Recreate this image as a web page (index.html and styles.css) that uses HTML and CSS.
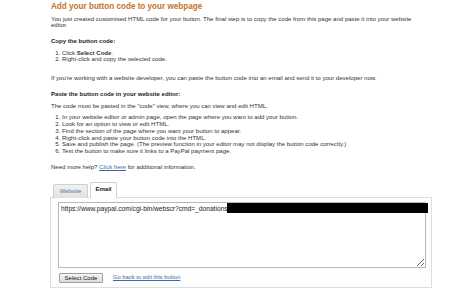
FILE: index.html
```html
<!DOCTYPE html>
<html>
<head>
<meta charset="utf-8">
<link rel="stylesheet" href="styles.css">
</head>
<body>
<div class="page">
  <h1 class="title">Add your button code to your webpage</h1>
  <p class="intro">You just created customised HTML code for your button. The final step is to copy the code from this page and paste it into your website editor.</p>
  <h2 class="sub sub-copy">Copy the button code:</h2>
  <ol class="steps steps-copy">
    <li>Click <b>Select Code</b>.</li>
    <li>Right-click and copy the selected code.</li>
  </ol>
  <p class="dev">If you're working with a website developer, you can paste the button code into an email and send it to your developer now.</p>
  <h2 class="sub sub-paste">Paste the button code in your website editor:</h2>
  <p class="must">The code must be pasted in the "code" view, where you can view and edit HTML.</p>
  <ol class="steps steps-paste">
    <li>In your website editor or admin page, open the page where you want to add your button.</li>
    <li>Look for an option to view or edit HTML.</li>
    <li>Find the section of the page where you want your button to appear.</li>
    <li>Right-click and paste your button code into the HTML.</li>
    <li>Save and publish the page. (The preview function in your editor may not display the button code correctly.)</li>
    <li>Test the button to make sure it links to a PayPal payment page.</li>
  </ol>
  <p class="help">Need more help? <a href="#">Click here</a> for additional information.</p>

  <div class="tabs">
    <div class="tab">Website</div>
    <div class="tab tab-active">Email</div>
  </div>
  <div class="panel">
    <div class="code-wrap">
      <textarea class="code">https://www.paypal.com/cgi-bin/webscr?cmd=_donations</textarea>
      <span class="redact"></span>
    </div>
    <div class="actions">
      <button class="select-btn">Select Code</button>
      <a class="back" href="#">Go back to edit this button</a>
    </div>
  </div>
</div>
</body>
</html>
```

FILE: styles.css
```css
html, body {
  margin: 0;
  padding: 0;
  background: #fff;
}
.page {
  font-family: "Liberation Sans", Arial, sans-serif;
  font-size: 6.05px;
  line-height: 6.8px;
  color: #333;
  margin-left: 51px;
  width: 382px;
  padding-top: 2px;
}
.page p,
.page ol {
  max-width: 370px;
}
.title {
  margin: 0;
  font-size: 8.15px;
  line-height: 10px;
  color: #c5732a;
  font-weight: bold;
}
.intro {
  margin: 3.6px 0 0;
}
.sub {
  margin: 0;
  font-size: 6.05px;
  font-weight: bold;
  color: #222;
}
.sub-copy { margin-top: 8.4px; }
.steps {
  margin: 0;
  padding-left: 11px;
}
.steps-copy { margin-top: 5.2px; }
.dev { margin: 12.2px 0 0; }
.sub-paste { margin-top: 9.2px; }
.must { margin: 5.2px 0 0; }
.steps-paste { margin-top: 4.2px; }
.help { margin: 9.2px 0 0; }
.help a, .back {
  color: #3b69a8;
  text-decoration: underline;
}
.tabs {
  display: flex;
  align-items: flex-end;
  gap: 2px;
  margin-top: 10.6px;
  padding-left: 2px;
  height: 15px;
}
.tab {
  box-sizing: border-box;
  height: 14px;
  width: 35px;
  border: 1px solid #d0d0d0;
  border-bottom: none;
  background: linear-gradient(#f0f0f0, #e2e2e2);
  color: #55759c;
  text-align: center;
  line-height: 13px;
  border-radius: 2px 2px 0 0;
  position: relative;
  top: 1px;
}
.tab-active {
  height: 16px;
  width: 27px;
  background: #fff;
  color: #222;
  font-weight: bold;
  line-height: 13px;
}
.panel {
  box-sizing: border-box;
  width: 382px;
  height: 91px;
  margin-left: -1px;
  border: 1px solid #dedede;
  background: #fdfdfd;
  padding: 4px 6px 0 7px;
}
.code-wrap {
  position: relative;
  height: 66px;
}
.code {
  box-sizing: border-box;
  display: block;
  width: 368px;
  height: 66px;
  margin: 0;
  border: 1px solid #b8b8b8;
  background: #fff;
  font-family: "Liberation Sans", Arial, sans-serif;
  font-size: 6.65px;
  line-height: 7.5px;
  color: #222;
  padding: 2px 2px;
  resize: both;
  outline: none;
}
.redact {
  position: absolute;
  left: 169px;
  top: 1px;
  width: 201px;
  height: 10px;
  background: #000;
}
.actions {
  display: flex;
  align-items: center;
  gap: 10px;
  margin-top: 5px;
  padding-left: 1px;
}
.select-btn {
  box-sizing: border-box;
  width: 44px;
  height: 10px;
  padding: 0;
  font-family: "Liberation Sans", Arial, sans-serif;
  font-size: 6.05px;
  line-height: 8px;
  color: #111;
  background: linear-gradient(#f6f6f6, #dcdcdc);
  border: 1px solid #a0a0a0;
  border-radius: 1px;
}
.back {
  font-size: 5.8px;
}
```
